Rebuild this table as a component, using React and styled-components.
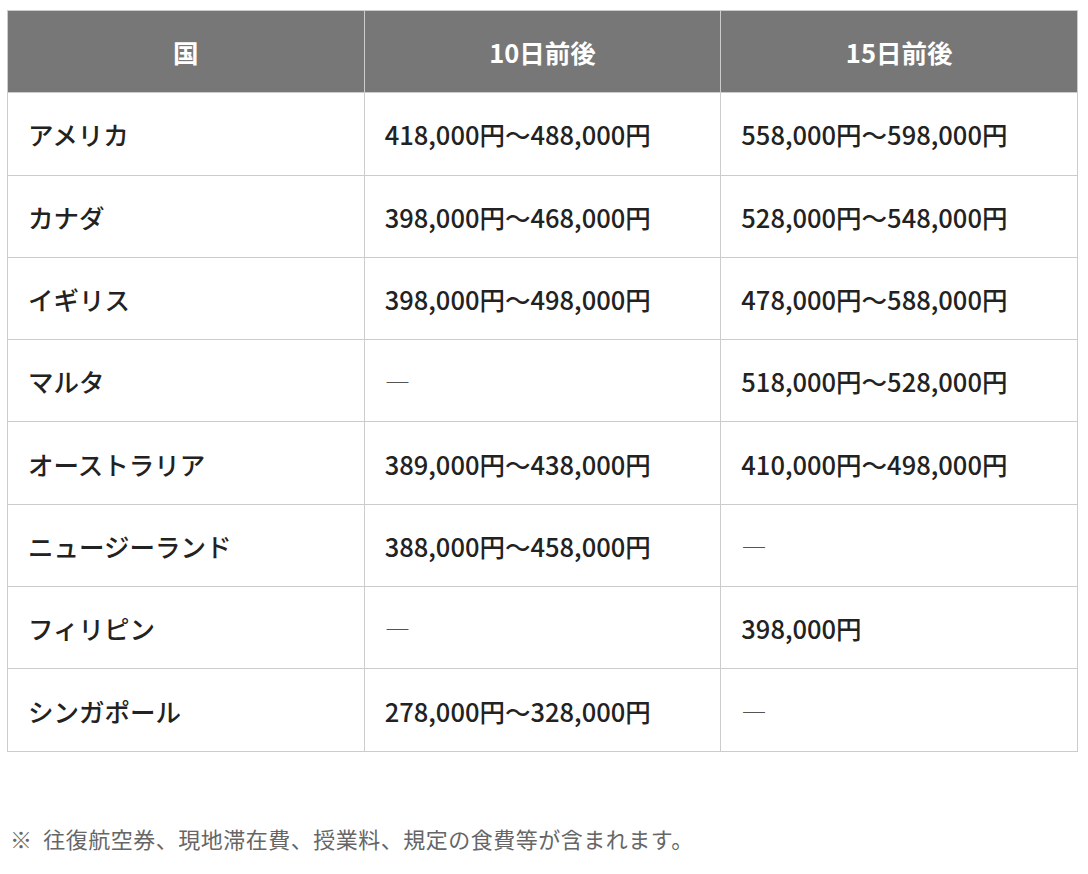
import styled, { createGlobalStyle } from 'styled-components'

const GlobalStyle = createGlobalStyle`
  body {
    margin: 0;
    background: #fff;
    font-family: "Noto Sans CJK JP", "Noto Sans", sans-serif;
    color: #222;
  }
`

const rows = [
  ['アメリカ', '418,000円〜488,000円', '558,000円〜598,000円'],
  ['カナダ', '398,000円〜468,000円', '528,000円〜548,000円'],
  ['イギリス', '398,000円〜498,000円', '478,000円〜588,000円'],
  ['マルタ', '―', '518,000円〜528,000円'],
  ['オーストラリア', '389,000円〜438,000円', '410,000円〜498,000円'],
  ['ニュージーランド', '388,000円〜458,000円', '―'],
  ['フィリピン', '―', '398,000円'],
  ['シンガポール', '278,000円〜328,000円', '―']
]

function App() {
  return (
    <Page>
      <GlobalStyle />
      <Table>
        <thead>
          <tr>
            <Head>国</Head>
            <Head>10日前後</Head>
            <Head>15日前後</Head>
          </tr>
        </thead>
        <tbody>
          {rows.map(row => (
            <tr key={row[0]}>
              {row.map((cell, i) => (
                <Cell key={i} $dash={cell === '―'}>
                  {cell}
                </Cell>
              ))}
            </tr>
          ))}
        </tbody>
      </Table>
      <Note>※&nbsp; 往復航空券、現地滞在費、授業料、規定の食費等が含まれます。</Note>
    </Page>
  )
}

export default App

const Page = styled.div`
  padding: 10px 10px 0 7px;
`

const Table = styled.table`
  width: 100%;
  border-collapse: collapse;
  table-layout: fixed;
`

const Head = styled.th`
  height: 81.3px;
  background-color: #777;
  color: #fff;
  font-size: 25.5px;
  font-weight: 700;
  border: 1.5px solid #ccc;
  text-align: center;
  padding: 0;
`

const Cell = styled.td`
  height: 81.3px;
  border: 1.5px solid #ccc;
  padding: 0 0 0 20px;
  font-size: 25.5px;
  color: ${p => (p.$dash ? '#555' : '#222')};
  font-weight: ${p => (p.$dash ? 300 : 500)};
`

const Note = styled.p`
  margin: 70px 0 0 3px;
  font-size: 22px;
  letter-spacing: 0.5px;
  color: #666;
`
